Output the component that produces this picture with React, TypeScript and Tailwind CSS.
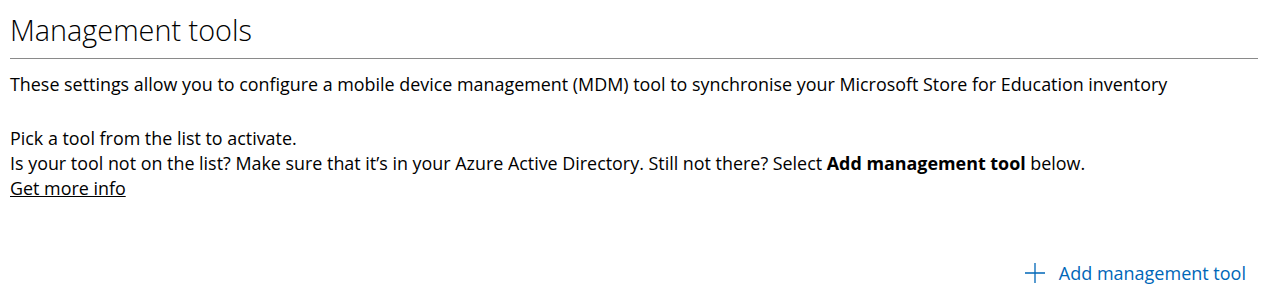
export default function App() {
  return (
    <div className="w-[1266px] h-[304px] bg-white text-black px-[10px] pr-[8px]" style={{ fontFamily: '"Open Sans", "Noto Sans", sans-serif' }}>
      <h1 className="text-[28.8px] font-light leading-[36px] pt-[12px] pb-[10px] border-b border-[#8a8a8a]">Management tools</h1>
      <p className="text-[17.9px] leading-[25px] mt-[13px]">These settings allow you to configure a mobile device management (MDM) tool to synchronise your Microsoft Store for Education inventory</p>
      <div className="text-[17.9px] leading-[25px] mt-[29px]">
        <p>Pick a tool from the list to activate.</p>
        <p>Is your tool not on the list? Make sure that it’s in your Azure Active Directory. Still not there? Select <span className="font-bold">Add management tool</span> below.</p>
        <a className="underline">Get more info</a>
      </div>
      <div className="flex justify-end mt-[60px] pr-[12px]">
        <button className="flex items-center gap-[14px] text-[#0067b8] text-[18px] leading-[24px]">
          <svg width="20" height="20" viewBox="0 0 20 20" className="stroke-[#0067b8]"><path d="M10 0v20M0 10h20" strokeWidth="1.3" fill="none" /></svg>
          <span>Add management tool</span>
        </button>
      </div>
    </div>
  );
}
